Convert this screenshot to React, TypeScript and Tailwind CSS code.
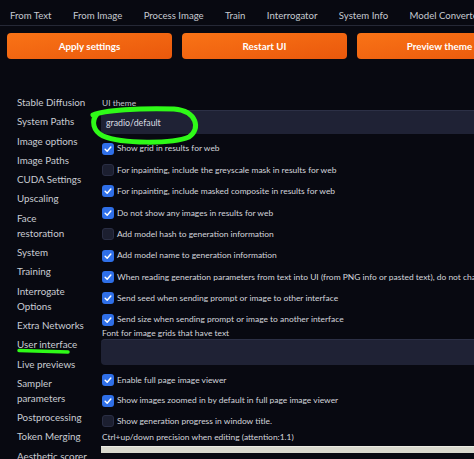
import React from "react";

const Check = ({ on }: { on: boolean }) =>
  on ? (
    <span className="w-[12px] h-[12px] rounded-[3px] bg-[#2f6fe8] flex items-center justify-center shrink-0">
      <svg viewBox="0 0 12 12" className="w-[10px] h-[10px]">
        <path d="M2.6 6.3 L5 8.6 L9.4 3.6" stroke="white" strokeWidth="1.8" fill="none" strokeLinecap="round" strokeLinejoin="round" />
      </svg>
    </span>
  ) : (
    <span className="w-[12px] h-[12px] rounded-[3px] bg-[#1c1f30] border border-[#2a2e44] shrink-0" />
  );

const Row = ({ on, label, h = "h-[21.4px]" }: { on: boolean; label: string; h?: string }) => (
  <div className={`flex items-center gap-[3px] pl-[1px] whitespace-nowrap ${h}`}>
    <Check on={on} />
    <span className="text-[8.45px] text-[#d4d6dc]">{label}</span>
  </div>
);

export default function App() {
  const tabs = ["From Text", "From Image", "Process Image", "Train", "Interrogator", "System Info", "Model Converter"];
  const side: React.ReactNode[] = [
    "Stable Diffusion",
    "System Paths",
    "Image options",
    "Image Paths",
    "CUDA Settings",
    "Upscaling",
    <>Face<br />restoration</>,
    "System",
    "Training",
    <>Interrogate<br />Options</>,
    "Extra Networks",
    "User interface",
    "Live previews",
    <>Sampler<br />parameters</>,
    "Postprocessing",
    "Token Merging",
    "Aesthetic scorer",
  ];
  return (
    <div className="relative w-[474px] h-[459px] overflow-hidden bg-[#080911] font-['Lato',sans-serif]">
      <div className="flex h-[26px] border-b border-[#252836] whitespace-nowrap">
        {tabs.map((t) => (
          <div key={t} className="px-[10.7px] pt-[10px] text-[9.6px] leading-[12px] text-[#c6c9d0] first:pl-[10px]">
            {t}
          </div>
        ))}
      </div>
      <div className="flex gap-[10px] pl-[7px] mt-[7px] whitespace-nowrap">
        {["Apply settings", "Restart UI", "Preview theme"].map((b) => (
          <div
            key={b}
            className="w-[165px] h-[26px] shrink-0 rounded-[4px] bg-gradient-to-br from-[#f97316] to-[#ea580c] flex items-center justify-center text-white font-bold text-[9.8px]"
          >
            {b}
          </div>
        ))}
      </div>
      <div className="flex mt-[36px]">
        <div className="w-[101px] shrink-0 pl-[17px] flex flex-col gap-[4.3px] text-[9.8px] leading-[15px] text-[#c9ccd3] whitespace-nowrap">
          {side.map((s, i) => (
            <div key={i}>{s}</div>
          ))}
        </div>
        <div className="w-[400px] shrink-0 mt-[2px] flex flex-col">
          <div className="text-[8.4px] leading-[12px] pl-[1px] text-[#c3c6ce]">UI theme</div>
          <div className="mt-[1px] h-[24px] bg-[#1f2235] border-t border-[#2c3046] rounded-[3px] flex items-center pl-[5px] text-[8.8px] text-[#dadce2]">
            gradio/default
          </div>
          <div className="mt-[4px] flex flex-col">
            <Row on label="Show grid in results for web" />
            <Row on={false} label="For inpainting, include the greyscale mask in results for web" />
            <Row on label="For inpainting, include masked composite in results for web" />
            <Row on label="Do not show any images in results for web" />
            <Row on={false} label="Add model hash to generation information" />
            <Row on label="Add model name to generation information" />
            <Row on label="When reading generation parameters from text into UI (from PNG info or pasted text), do not change the selected model/checkpoint." />
            <Row on label="Send seed when sending prompt or image to other interface" />
            <Row on label="Send size when sending prompt or image to another interface" />
          </div>
          <div className="text-[8.45px] leading-[12px] text-[#d4d6dc] pl-[1px] mt-[-4px]">Font for image grids that have text</div>
          <div className="h-[26px] bg-[#1f2235] border-t border-[#2c3046] rounded-[4px]" />
          <div className="mt-[5.5px] flex flex-col">
            <Row on label="Enable full page image viewer" h="h-[20.5px]" />
            <Row on label="Show images zoomed in by default in full page image viewer" h="h-[20.5px]" />
            <Row on={false} label="Show generation progress in window title." h="h-[20.5px]" />
          </div>
          <div className="text-[8.45px] leading-[10px] text-[#d4d6dc] pl-[1px]">Ctrl+up/down precision when editing (attention:1.1)</div>
          <div className="mt-[4px] h-[7px] bg-[#d9d9ce] border-t border-[#ecece4]" />
        </div>
      </div>
      <svg className="absolute left-0 top-0 w-[474px] h-[459px] pointer-events-none" viewBox="0 0 474 459">
        <path
          d="M93 115 C 104 110, 140 108, 174 109 C 197 111, 201 129, 189 137 C 172 144, 122 144, 103 136 C 93 131, 91 121, 97 114"
          stroke="#2ffa18"
          strokeWidth="5"
          fill="none"
          strokeLinecap="round"
        />
        <path d="M19 350.5 L 68 352" stroke="#2ffa18" strokeWidth="3.5" fill="none" strokeLinecap="round" />
      </svg>
    </div>
  );
}
